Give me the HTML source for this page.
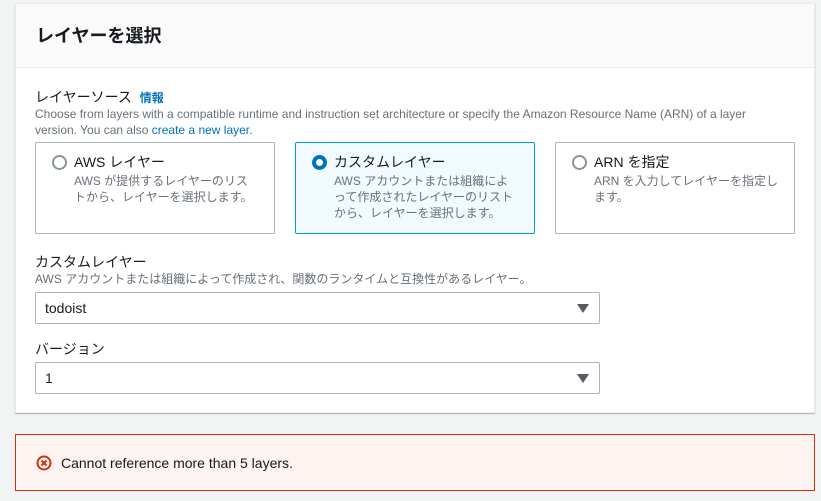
<!DOCTYPE html>
<html><head><meta charset="utf-8"><style>
*{box-sizing:border-box;margin:0;padding:0}
body{width:821px;height:501px;background:#f2f3f3;font-family:"Liberation Sans","Noto Sans CJK JP",sans-serif;color:#16191f;position:relative;overflow:hidden}
.panel{position:absolute;left:15px;top:3px;width:800px;height:410px;background:#fff;border:1px solid #eaeded;box-shadow:0 1px 1px rgba(0,28,36,.3)}
.hd{height:64px;background:#fafafa;border-bottom:1px solid #eaeded;padding:18px 20px;font-size:18px;font-weight:bold}
.abs{position:absolute}
.lbl{font-size:14px}
.desc{font-size:12px;color:#687078;line-height:16px}
a{color:#0073bb;text-decoration:none}
.card{position:absolute;top:142px;width:240px;height:92px;border:1px solid #aab7b8;border-radius:2px;padding:10px 0 0 38px}
.card.sel{border-color:#00a1c9;background:#f1faff}
.card .t{font-size:14px;line-height:18px}
.card .d{font-size:12px;color:#687078;line-height:16px;margin-top:2px;white-space:nowrap}
.rad{position:absolute;left:16px;top:12px;width:15px;height:15px;border-radius:50%;border:2px solid #879596;background:#fff}
.sel .rad{border:4px solid #0073bb}
.select{position:absolute;left:35px;width:565px;height:32px;border:1px solid #aab7b8;border-radius:2px;font-size:14px;padding:7px 9px}
.select:after{content:"";position:absolute;right:10px;top:11px;border-left:6px solid transparent;border-right:6px solid transparent;border-top:9px solid #545b64}
.err{position:absolute;left:15px;top:434px;width:800px;height:57px;border:1px solid #d13212;background:#fdf3f1;font-size:14px}
</style></head><body>
<div class="panel"><div class="hd">レイヤーを選択</div></div>
<div class="abs lbl" style="left:35px;top:87px">レイヤーソース <a style="font-weight:bold;font-size:12px;margin-left:4px">情報</a></div>
<div class="abs desc" style="left:35px;top:106px;width:735px">Choose from layers with a compatible runtime and instruction set architecture or specify the Amazon Resource Name (ARN) of a layer version. You can also <a>create a new layer.</a></div>
<div class="card" style="left:35px"><div class="rad"></div><div class="t">AWS レイヤー</div><div class="d">AWS が提供するレイヤーのリス<br>トから、レイヤーを選択します。</div></div>
<div class="card sel" style="left:295px"><div class="rad"></div><div class="t">カスタムレイヤー</div><div class="d">AWS アカウントまたは組織によ<br>って作成されたレイヤーのリスト<br>から、レイヤーを選択します。</div></div>
<div class="card" style="left:555px"><div class="rad"></div><div class="t">ARN を指定</div><div class="d">ARN を入力してレイヤーを指定し<br>ます。</div></div>
<div class="abs lbl" style="left:35px;top:252px">カスタムレイヤー</div>
<div class="abs desc" style="left:35px;top:271px">AWS アカウントまたは組織によって作成され、関数のランタイムと互換性があるレイヤー。</div>
<div class="select" style="top:292px">todoist</div>
<div class="abs lbl" style="left:35px;top:339px">バージョン</div>
<div class="select" style="top:362px">1</div>
<div class="err">
<svg class="abs" style="left:20px;top:20px" width="16" height="16" viewBox="0 0 16 16"><circle cx="8" cy="8" r="6.5" fill="none" stroke="#d13212" stroke-width="2"/><path d="M5.5 5.5l5 5M10.5 5.5l-5 5" stroke="#d13212" stroke-width="2"/></svg>
<div class="abs" style="left:45px;top:20px">Cannot reference more than 5 layers.</div>
</div>
</body></html>
